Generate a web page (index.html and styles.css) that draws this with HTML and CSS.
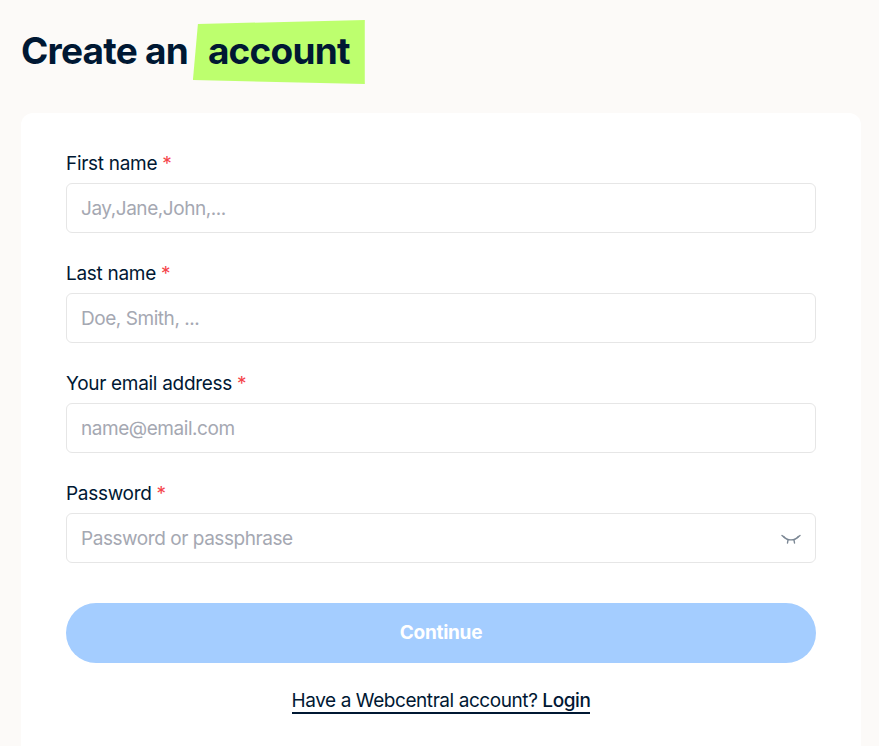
FILE: index.html
```html
<!DOCTYPE html>
<html lang="en">
<head>
    <meta charset="UTF-8">
    <title>Create an account</title>
    <link rel="stylesheet" href="styles.css">
</head>
<body>
    <h1 class="title">
        Create an
        <span class="highlight">account</span>
    </h1>

    <form class="card">
        <div class="field">
            <label class="field-label">First name <span class="required">*</span></label>
            <input type="text" class="field-input" placeholder="Jay,Jane,John,...">
        </div>

        <div class="field">
            <label class="field-label">Last name <span class="required">*</span></label>
            <input type="text" class="field-input" placeholder="Doe, Smith, ...">
        </div>

        <div class="field">
            <label class="field-label">Your email address <span class="required">*</span></label>
            <input type="email" class="field-input" placeholder="name@email.com">
        </div>

        <div class="field">
            <label class="field-label">Password <span class="required">*</span></label>
            <div class="password-wrap">
                <input type="password" class="field-input" placeholder="Password or passphrase">
                <svg class="eye-icon" width="20" height="10" viewBox="0 0 20 10" fill="none" stroke="#7b8794" stroke-width="1.4" stroke-linecap="round">
                    <path d="M2.500 2.500C6 7 14 7 17.500 2.500"/>
                    <path d="M1 1.500l2.500 2M19 1.500l-2.500 2M7 6l-.5 3M13 6l.5 3"/>
                </svg>
            </div>
        </div>

        <button type="button" class="continue-btn">Continue</button>

        <p class="login-line">
            <a class="login-link" href="#">Have a Webcentral account? <strong class="login-strong">Login</strong></a>
        </p>
    </form>
</body>
</html>
```

FILE: styles.css
```css
* {
    box-sizing: border-box;
}

html,
body {
    height: 100%;
}

body {
    margin: 0;
    padding: 20px 18px 0 21px;
    overflow: hidden;
    background: #fcfaf8;
    color: #001833;
    font-family: 'Inter', 'Liberation Sans', sans-serif;
}

.title {
    display: flex;
    align-items: flex-start;
    gap: 5px;
    height: 64px;
    margin: 0 0 29px;
    font-size: 37px;
    line-height: 62px;
    font-weight: 700;
    letter-spacing: -0.78px;
}

.highlight {
    padding: 0 15px;
    height: 64px;
    background: #bdff6e;
    clip-path: polygon(5px 4px, 100% 0, 100% 100%, 0 60px);
}

.card {
    height: 633px;
    padding: 37px 45px 0;
    background: #fff;
    border-radius: 12px 12px 0 0;
}

.field {
    margin-bottom: 27px;
}

.field-label {
    display: block;
    margin-bottom: 6px;
    font-size: 19px;
    line-height: 27px;
    font-weight: 400;
    letter-spacing: -0.3px;
}

.required {
    color: #f5434a;
}

.field-input {
    display: block;
    width: 100%;
    height: 50px;
    padding: 0 14px;
    border: 1px solid #e6e6e6;
    border-radius: 6px;
    background: #fff;
    font-family: inherit;
    font-size: 19px;
    letter-spacing: -0.45px;
}

.field-input::placeholder {
    color: #a5a8b2;
    opacity: 1;
}

.password-wrap {
    position: relative;
}

.eye-icon {
    position: absolute;
    top: 21px;
    right: 15px;
}

.continue-btn {
    display: block;
    width: 100%;
    height: 60px;
    margin-top: 40px;
    padding-bottom: 3px;
    border: none;
    border-radius: 30px;
    background: #a4cdff;
    color: #fff;
    font-family: inherit;
    font-size: 19px;
    font-weight: 700;
    letter-spacing: -0.27px;
}

.login-line {
    margin: 25px 0 0;
    text-align: center;
    font-size: 19px;
    line-height: 25px;
    letter-spacing: -0.43px;
}

.login-link {
    color: inherit;
    text-decoration: none;
    border-bottom: 2px solid #001833;
}

.login-strong {
    font-weight: 500;
}
```
